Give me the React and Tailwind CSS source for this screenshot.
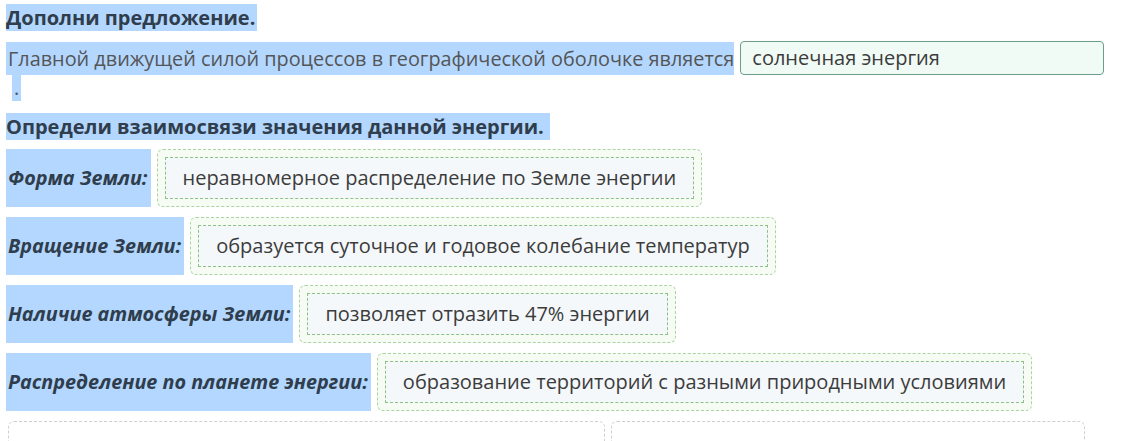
import React from "react";

const rows = [
  { label: "Форма Земли:", answer: "неравномерное распределение по Земле энергии" },
  { label: "Вращение Земли:", answer: "образуется суточное и годовое колебание температур" },
  { label: "Наличие атмосферы Земли:", answer: "позволяет отразить 47% энергии" },
  { label: "Распределение по планете энергии:", answer: "образование территорий с разными природными условиями" },
];

const MatchRow = ({ label, answer }) => (
  <div className="flex items-stretch gap-[6px] h-[58px]">
    <div className="bg-[#b3d7ff] flex items-center pl-[2px] pr-[3px]">
      <span className="font-bold italic text-[19.8px] text-[#2f3d4c]">{label}</span>
    </div>
    <div className="border border-dashed border-[#a9d59f] rounded-[6px] bg-[#f6fbf3] p-[7px] flex">
      <div className="border border-dashed border-[#8cc285] bg-[#f4f8fa] flex items-center px-[17px]">
        <span className="text-[20px] text-[#3c3c3c] whitespace-nowrap">{answer}</span>
      </div>
    </div>
  </div>
);

export default function App() {
  return (
    <div className="w-[1125px] h-[441px] overflow-hidden bg-white font-['Open_Sans',sans-serif] pl-[6px] pt-[4px]">
      <div className="h-[27px] flex">
        <span className="bg-[#b3d7ff] font-bold text-[20px] leading-[27px] text-[#2f3d4c] pr-[2px]">Дополни предложение.</span>
      </div>
      <div className="mt-[10px] flex items-center">
        <span className="bg-[#b3d7ff] text-[19.85px] text-[#555] leading-[33px] pl-[2px] whitespace-nowrap">
          Главной движущей силой процессов в географической оболочке является
        </span>
        <div className="ml-[6px] w-[364px] h-[34px] border border-[#6f9c8a] rounded-[4px] bg-[#f1fbf5] flex items-center px-[11px]">
          <span className="text-[20px] text-[#3c3c3c]">солнечная энергия</span>
        </div>
      </div>
      <div className="pl-[6px] h-[26px] flex">
        <span className="bg-[#b3d7ff] text-[20px] text-[#555] leading-[26px] px-[2px]">.</span>
      </div>
      <div className="mt-[12px] h-[27px] flex">
        <span className="bg-[#b3d7ff] font-bold text-[20px] leading-[27px] text-[#2f3d4c] pr-[6px]">
          Определи взаимосвязи значения данной энергии.
        </span>
      </div>
      <div className="mt-[9px] flex flex-col gap-[10px]">
        {rows.map((r) => (
          <MatchRow key={r.label} {...r} />
        ))}
      </div>
      <div className="mt-[10px] flex gap-[6px] pl-[2px]">
        <div className="w-[597px] h-[40px] border border-dashed border-[#cfcfcf] rounded-[6px]" />
        <div className="w-[474px] h-[40px] border border-dashed border-[#cfcfcf] rounded-[6px]" />
      </div>
    </div>
  );
}
